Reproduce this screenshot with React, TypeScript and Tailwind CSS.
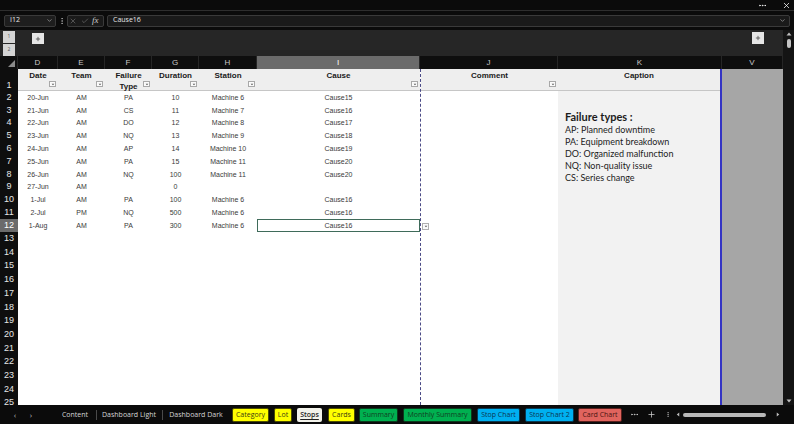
import React from 'react';
import { X, Check, ChevronDown, Ellipsis, EllipsisVertical, Plus } from 'lucide-react';

type RowData = [string, string, string, string, string, string];

const rows: RowData[] = [
  ['20-Jun', 'AM', 'PA', '10', 'Machine 6', 'Cause15'],
  ['21-Jun', 'AM', 'CS', '11', 'Machine 7', 'Cause16'],
  ['22-Jun', 'AM', 'DO', '12', 'Machine 8', 'Cause17'],
  ['23-Jun', 'AM', 'NQ', '13', 'Machine 9', 'Cause18'],
  ['24-Jun', 'AM', 'AP', '14', 'Machine 10', 'Cause19'],
  ['25-Jun', 'AM', 'PA', '15', 'Machine 11', 'Cause20'],
  ['26-Jun', 'AM', 'NQ', '100', 'Machine 11', 'Cause20'],
  ['27-Jun', 'AM', '', '0', '', ''],
  ['1-Jul', 'AM', 'PA', '100', 'Machine 6', 'Cause16'],
  ['2-Jul', 'PM', 'NQ', '500', 'Machine 6', 'Cause16'],
  ['1-Aug', 'AM', 'PA', '300', 'Machine 6', 'Cause16'],
];

const dataRowNums = Array.from({ length: 11 }, (_, i) => i + 2);
const emptyRowNums = Array.from({ length: 13 }, (_, i) => i + 13);

const captionLines = [
  'AP: Planned downtime',
  'PA: Equipment breakdown',
  'DO: Organized malfunction',
  'NQ: Non-quality issue',
  'CS: Series change',
];

const FilterButton = () => (
  <span className="absolute right-[2px] bottom-[3px] flex h-[6px] w-[7px] items-center justify-center border border-[#a8a8a8] bg-[#fbfbfb]">
    <svg viewBox="0 0 6 4" className="h-[3px] w-[4px]">
      <path d="M1 1h4L3 3.2z" fill="#555" />
    </svg>
  </span>
);

const ColLetter = ({ letter, active }: { letter: string; active?: boolean }) => (
  <div
    className={`flex h-[13px] shrink-0 items-center justify-center border-r border-[#262626] text-[8px] leading-none ${
      active ? 'bg-[#6b6b6b] text-white' : 'bg-[#0e0e0e] text-[#c8c8c8]'
    }`}
  >
    {letter}
  </div>
);

interface DataColumnProps {
  letter: string;
  width: string;
  title: React.ReactNode;
  values: string[];
  active?: boolean;
  selectedIndex?: number;
}

const DataColumn: React.FC<DataColumnProps> = ({ letter, width, title, values, active, selectedIndex }) => (
  <div className={`flex shrink-0 flex-col ${width}`}>
    <ColLetter letter={letter} active={active} />
    <div className="relative h-[22px] shrink-0 border-b border-[#c6c6c6] bg-[#eeeeee] pt-[2px] text-center text-[8px] font-bold leading-[10.5px] text-[#1a1a1a]">
      {title}
      <FilterButton />
    </div>
    <div className="bg-white">
      {values.map((v, i) => (
        <div
          key={i}
          className={`relative flex h-[12.8px] items-center justify-center text-[7px] leading-none text-[#3a3a3a] ${
            i === selectedIndex ? 'border border-[#3f6b5a]' : ''
          }`}
        >
          {v}
          {i === selectedIndex && (
            <span className="absolute -right-[10px] top-[3px] flex h-[7px] w-[7px] items-center justify-center border border-[#b0b0b0] bg-[#fbfbfb]">
              <svg viewBox="0 0 6 4" className="h-[3px] w-[4px]">
                <path d="M1 1h4L3 3.2z" fill="#555" />
              </svg>
            </span>
          )}
        </div>
      ))}
      {emptyRowNums.map((n) => (
        <div key={n} className="h-[13.7px]" />
      ))}
    </div>
  </div>
);

const RowHeaders = () => (
  <div className="flex w-[18px] shrink-0 flex-col bg-[#0e0e0e] text-[9px] leading-none text-[#e6e6e6]">
    <div className="relative h-[13px] shrink-0 border-r border-[#262626]">
      <svg viewBox="0 0 8 8" className="absolute right-[2px] bottom-[2px] h-[7px] w-[7px]">
        <path d="M8 0V8H0z" fill="#8a8a8a" />
      </svg>
    </div>
    <div className="flex h-[22px] shrink-0 items-end justify-center pb-[1px]">1</div>
    {dataRowNums.map((n) => (
      <div
        key={n}
        className={`flex h-[12.8px] shrink-0 items-center justify-center ${n === 12 ? 'bg-[#6b6b6b] text-white' : ''}`}
      >
        {n}
      </div>
    ))}
    {emptyRowNums.map((n) => (
      <div key={n} className="flex h-[13.7px] shrink-0 items-center justify-center">
        {n}
      </div>
    ))}
  </div>
);

const Grid = () => (
  <div className="flex min-h-0 flex-1 overflow-hidden font-['Liberation_Sans',Arial,sans-serif]">
    <RowHeaders />
    <DataColumn letter="D" width="w-[40px]" title="Date" values={rows.map((r) => r[0])} />
    <DataColumn letter="E" width="w-[47px]" title="Team" values={rows.map((r) => r[1])} />
    <DataColumn
      letter="F"
      width="w-[47px]"
      title={
        <>
          Failure
          <br />
          Type
        </>
      }
      values={rows.map((r) => r[2])}
    />
    <DataColumn letter="G" width="w-[47px]" title="Duration" values={rows.map((r) => r[3])} />
    <DataColumn letter="H" width="w-[58px]" title="Station" values={rows.map((r) => r[4])} />
    <DataColumn letter="I" width="w-[163px]" title="Cause" values={rows.map((r) => r[5])} active selectedIndex={10} />

    {/* Comment column, page break on its left */}
    <div className="flex w-[138px] shrink-0 flex-col">
      <ColLetter letter="J" />
      <div className="flex-1 border-l border-dashed border-[#4a4a86] bg-white">
        <div className="relative h-[22px] border-b border-[#c6c6c6] bg-[#eeeeee] pt-[2px] text-center text-[8px] font-bold leading-[10.5px] text-[#1a1a1a]">
          Comment
          <FilterButton />
        </div>
      </div>
    </div>

    {/* Caption column */}
    <div className="flex w-[164px] shrink-0 flex-col">
      <ColLetter letter="K" />
      <div className="flex-1 border-r-2 border-[#3434c4] bg-[#f2f2f2]">
        <div className="h-[22px] border-b border-[#c6c6c6] bg-[#eeeeee] pt-[2px] text-center text-[8px] font-bold leading-[10.5px] text-[#1a1a1a]">
          Caption
        </div>
        <div className="pl-[7px] pt-[19px] font-['Lato',sans-serif] text-[#1c1c1c]">
          <div className="text-[11px] font-bold leading-[14px]">Failure types :</div>
          {captionLines.map((line) => (
            <div key={line} className="text-[9px] leading-[12px]">
              {line}
            </div>
          ))}
        </div>
      </div>
    </div>

    <div className="flex w-[61px] shrink-0 flex-col">
      <ColLetter letter="V" />
      <div className="flex-1 bg-[#a6a6a6]" />
    </div>
  </div>
);

const OutlineBar = () => (
  <div className="flex h-[26px] shrink-0 bg-[#262626]">
    <div className="flex flex-col gap-px pl-[3px] pt-px">
      <div className="flex h-[12px] w-[12px] items-center justify-center bg-[#d4d4d4] text-[5px] text-[#555]">1</div>
      <div className="flex h-[12px] w-[12px] items-center justify-center bg-[#d4d4d4] text-[5px] text-[#555]">2</div>
    </div>
    <div className="ml-[17px] mt-[3px] flex h-[11px] w-[12px] items-center justify-center bg-[#e6e6e6]">
      <Plus className="h-[6px] w-[6px] text-[#444]" strokeWidth={3} />
    </div>
    <div className="flex-1" />
    <div className="mr-[19px] mt-[2px] flex h-[12px] w-[12px] items-center justify-center bg-[#e6e6e6]">
      <Plus className="h-[6px] w-[6px] text-[#444]" strokeWidth={3} />
    </div>
  </div>
);

const VScroll = () => (
  <div className="flex w-[11px] shrink-0 flex-col items-center bg-[#141414] pt-[2px]">
    <svg viewBox="0 0 6 4" className="h-[4px] w-[6px]">
      <path d="M3 0.5L5.5 3.5H0.5z" fill="#bdbdbd" />
    </svg>
    <div className="mt-[3px] h-[9px] w-[4px] rounded-full bg-[#c4c4c4]" />
    <div className="flex-1" />
    <svg viewBox="0 0 6 4" className="mb-[2px] h-[4px] w-[6px]">
      <path d="M0.5 0.5H5.5L3 3.5z" fill="#bdbdbd" />
    </svg>
  </div>
);

const tabBase = 'flex h-[14px] shrink-0 items-center justify-center rounded-[2px] text-[7px] leading-none whitespace-nowrap';

const Tabs = () => (
  <div className="flex h-[19px] shrink-0 items-center bg-[#0b0b0b] font-['Open_Sans',sans-serif]">
    <span className="ml-[11px] w-[8px] text-center text-[8px] text-[#bdbdbd]">‹</span>
    <span className="ml-[8px] w-[8px] text-center text-[8px] text-[#bdbdbd]">›</span>
    <div className={`${tabBase} ml-[21px] w-[38px] text-[#d6d6d6]`}>Content</div>
    <div className="ml-[2px] h-[10px] w-px bg-[#4a4a4a]" />
    <div className={`${tabBase} ml-px w-[62px] text-[#d6d6d6]`}>Dashboard Light</div>
    <div className="ml-[2px] h-[10px] w-px bg-[#4a4a4a]" />
    <div className={`${tabBase} ml-[2px] w-[62px] text-[#d6d6d6]`}>Dashboard Dark</div>
    <div className={`${tabBase} ml-[5px] w-[37px] border border-[#4d4d00] bg-[#ffff00] text-[#3a3a10]`}>Category</div>
    <div className={`${tabBase} ml-[5px] w-[18px] border border-[#4d4d00] bg-[#ffff00] text-[#3a3a10]`}>Lot</div>
    <div className={`${tabBase} ml-[5px] w-[25px] bg-[#f2f2ea] font-semibold text-[#222] underline underline-offset-2`}>Stops</div>
    <div className={`${tabBase} ml-[6px] w-[27px] border border-[#4d4d00] bg-[#ffff00] text-[#3a3a10]`}>Cards</div>
    <div className={`${tabBase} ml-[4px] w-[39px] border border-[#0b3a1c] bg-[#00b050] text-[#123d22]`}>Summary</div>
    <div className={`${tabBase} ml-[5px] w-[69px] border border-[#0b3a1c] bg-[#00b050] text-[#123d22]`}>Monthly Summary</div>
    <div className={`${tabBase} ml-[5px] w-[43px] border border-[#073a52] bg-[#00b0f0] text-[#0d3550]`}>Stop Chart</div>
    <div className={`${tabBase} ml-[5px] w-[49px] border border-[#073a52] bg-[#00b0f0] text-[#0d3550]`}>Stop Chart 2</div>
    <div className={`${tabBase} ml-[4px] w-[44px] border border-[#5a1f1c] bg-[#e0645e] text-[#4a1412]`}>Card Chart</div>
    <div className="ml-[6px] flex w-[12px] justify-center text-[#d0d0d0]">
      <Ellipsis className="h-[9px] w-[9px]" />
    </div>
    <div className="ml-[5px] flex w-[12px] justify-center text-[#d0d0d0]">
      <Plus className="h-[9px] w-[9px]" />
    </div>
    <div className="ml-[8px] flex w-[6px] justify-center text-[#d0d0d0]">
      <EllipsisVertical className="h-[9px] w-[9px]" />
    </div>
    <svg viewBox="0 0 4 6" className="ml-[5px] h-[5px] w-[4px]">
      <path d="M3.5 0.5V5.5L0.5 3z" fill="#bdbdbd" />
    </svg>
    <div className="ml-[3px] h-[4px] w-[83px] rounded-full bg-[#b8b8b8]" />
    <svg viewBox="0 0 4 6" className="ml-[10px] h-[5px] w-[4px]">
      <path d="M0.5 0.5V5.5L3.5 3z" fill="#bdbdbd" />
    </svg>
  </div>
);

export default function App() {
  return (
    <div className="flex h-[424px] w-[794px] flex-col overflow-hidden bg-[#0b0b0b] font-['Open_Sans',sans-serif]">
      {/* window chrome */}
      <div className="flex h-[10px] shrink-0 items-center justify-end gap-[15px] pr-[3px] text-white">
        <Ellipsis className="h-[9px] w-[9px]" />
        <X className="h-[9px] w-[9px]" />
      </div>
      <div className="h-px shrink-0 bg-[#2e2e2e]" />

      {/* formula bar */}
      <div className="flex h-[19px] shrink-0 items-center pl-[4px] pr-[4px]">
        <div className="flex h-[12px] w-[52px] items-center justify-between rounded-[2px] border border-[#3a3a3a] bg-[#1e1e1e] pl-[5px] pr-[2px] text-[7px] text-[#e8e8e8]">
          I12
          <ChevronDown className="h-[7px] w-[7px] text-[#bbb]" />
        </div>
        <EllipsisVertical className="ml-[2px] h-[8px] w-[8px] text-[#bbb]" />
        <div className="ml-px flex h-[12px] w-[37px] items-center rounded-[2px] border border-[#3a3a3a] bg-[#1a1a1a] pl-[1px] text-[#8a8a8a]">
          <X className="h-[8px] w-[8px]" strokeWidth={1.5} />
          <Check className="ml-[4px] h-[8px] w-[8px]" strokeWidth={1.5} />
          <span className="ml-[3px] font-['Liberation_Serif',serif] text-[9px] italic leading-none text-[#cfcfcf]">fx</span>
        </div>
        <div className="ml-[3px] flex h-[12px] flex-1 items-center justify-between rounded-[2px] border border-[#3a3a3a] bg-[#1a1a1a] pl-[5px] pr-[3px] text-[7px] text-[#e8e8e8]">
          Cause16
          <ChevronDown className="h-[7px] w-[7px] text-[#bbb]" />
        </div>
      </div>

      {/* sheet */}
      <div className="flex min-h-0 flex-1">
        <div className="flex w-[783px] shrink-0 flex-col">
          <OutlineBar />
          <Grid />
        </div>
        <VScroll />
      </div>

      <Tabs />
    </div>
  );
}
